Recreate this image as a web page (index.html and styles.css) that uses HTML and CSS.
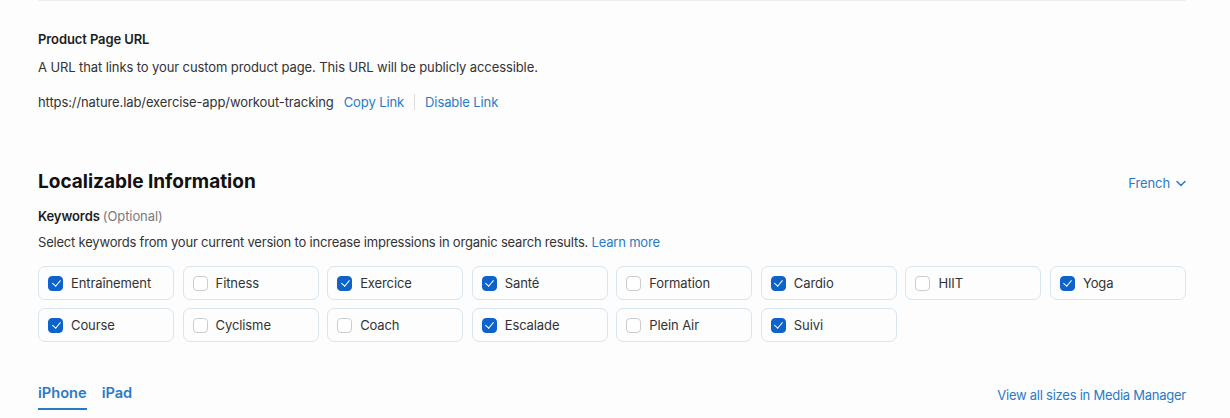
FILE: index.html
```html
<!DOCTYPE html>
<html>
<head>
<meta charset="utf-8">
<link rel="stylesheet" href="styles.css">
</head>
<body>
<div class="page">
  <div class="topline"></div>
  <section class="url-section">
    <div class="label">Product Page URL</div>
    <p class="desc">A URL that links to your custom product page. This URL will be publicly accessible.</p>
    <div class="url-row">
      <span class="url">https://nature.lab/exercise-app/workout-tracking</span>
      <a class="link">Copy Link</a>
      <span class="sep"></span>
      <a class="link">Disable Link</a>
    </div>
  </section>

  <section class="loc">
    <div class="loc-head">
      <h2>Localizable Information</h2>
      <a class="lang">French
        <svg width="10" height="7" viewBox="0 0 10 7"><path d="M1 1.5 5 5.5 9 1.5" fill="none" stroke="#2a7bc4" stroke-width="1.5" stroke-linecap="round" stroke-linejoin="round"/></svg>
      </a>
    </div>
    <div class="label kw">Keywords <span class="opt">(Optional)</span></div>
    <p class="desc tight">Select keywords from your current version to increase impressions in organic search results. <a class="link">Learn more</a></p>

    <div class="grid">
      <label class="kwbox"><span class="cb on"></span>Entraînement</label>
      <label class="kwbox"><span class="cb"></span>Fitness</label>
      <label class="kwbox"><span class="cb on"></span>Exercice</label>
      <label class="kwbox"><span class="cb on"></span>Santé</label>
      <label class="kwbox"><span class="cb"></span>Formation</label>
      <label class="kwbox"><span class="cb on"></span>Cardio</label>
      <label class="kwbox"><span class="cb"></span>HIIT</label>
      <label class="kwbox"><span class="cb on"></span>Yoga</label>
      <label class="kwbox"><span class="cb on"></span>Course</label>
      <label class="kwbox"><span class="cb"></span>Cyclisme</label>
      <label class="kwbox"><span class="cb"></span>Coach</label>
      <label class="kwbox"><span class="cb on"></span>Escalade</label>
      <label class="kwbox"><span class="cb"></span>Plein Air</label>
      <label class="kwbox"><span class="cb on"></span>Suivi</label>
    </div>
  </section>

  <div class="tabs-row">
    <div class="tabs">
      <a class="tab active">iPhone</a>
      <a class="tab">iPad</a>
    </div>
    <a class="link view">View all sizes in Media Manager</a>
  </div>
</div>
</body>
</html>
```

FILE: styles.css
```css
* { box-sizing: border-box; }
html, body { margin: 0; padding: 0; background: #fdfdfd; }
body {
  font-family: Inter, "Noto Sans", "Liberation Sans", sans-serif;
  font-size: 13px;
  letter-spacing: -0.1px;
  color: #1d1d1f;
  -webkit-font-smoothing: antialiased;
}
.page { padding: 0 44px 0 38px; height: 418px; overflow: hidden; }
.topline { height: 1px; background: #eeeeee; }

.label { font-weight: 600; font-size: 13px; line-height: 18px; color: #1d1d1f; }
.url-section { padding-top: 29px; }
.desc { margin: 10px 0 0; font-size: 13px; line-height: 18px; color: #333336; }
.desc.tight { letter-spacing: -0.2px; }
.url-row { display: flex; align-items: center; margin-top: 17px; line-height: 18px; color: #333336; }
.url { margin-right: 10px; }
.link { color: #2a7bc4; cursor: pointer; }
.sep { width: 1px; height: 16px; background: #dddddd; margin: 0 10px; }

.loc { margin-top: 59px; }
.loc-head { display: flex; justify-content: space-between; align-items: center; }
h2 { margin: 0; font-size: 19px; line-height: 24px; font-weight: 700; letter-spacing: 0; color: #111; }
.lang { color: #2a7bc4; font-size: 13px; display: flex; align-items: center; gap: 6px; padding-top: 2px; }
.kw { margin-top: 13px; }
.opt { font-weight: 400; color: #7a7a7e; }
.loc .desc { margin-top: 8px; }

.grid {
  display: grid;
  grid-template-columns: repeat(8, 1fr);
  column-gap: 8.5px;
  row-gap: 8px;
  margin-top: 15px;
}
.kwbox {
  height: 34px;
  border: 1px solid #d7e5f0;
  border-radius: 7px;
  display: flex;
  align-items: center;
  padding-left: 9px;
  gap: 8px;
  color: #333336;
  font-size: 13px;
}
.cb {
  width: 15px; height: 15px;
  border: 1px solid #c9ccd1;
  border-radius: 4px;
  background: #fff;
  flex: none;
  position: relative;
}
.cb.on { background: #0d63c9; border-color: #0d63c9; }
.cb.on::after {
  content: "";
  position: absolute;
  left: 4.5px; top: 1.5px;
  width: 3.5px; height: 7px;
  border: solid #fff;
  border-width: 0 1.6px 1.6px 0;
  transform: rotate(40deg);
}

.tabs-row { display: flex; justify-content: space-between; align-items: flex-start; margin-top: 41px; }
.tabs { display: flex; gap: 15px; }
.tab { font-size: 14.6px; font-weight: 600; color: #2a7bc4; line-height: 20px; padding-bottom: 5px; letter-spacing: 0; }
.tab.active { border-bottom: 2px solid #2a7bc4; }
.view { font-size: 13px; line-height: 20px; padding-top: 2px; letter-spacing: -0.25px; }
```
